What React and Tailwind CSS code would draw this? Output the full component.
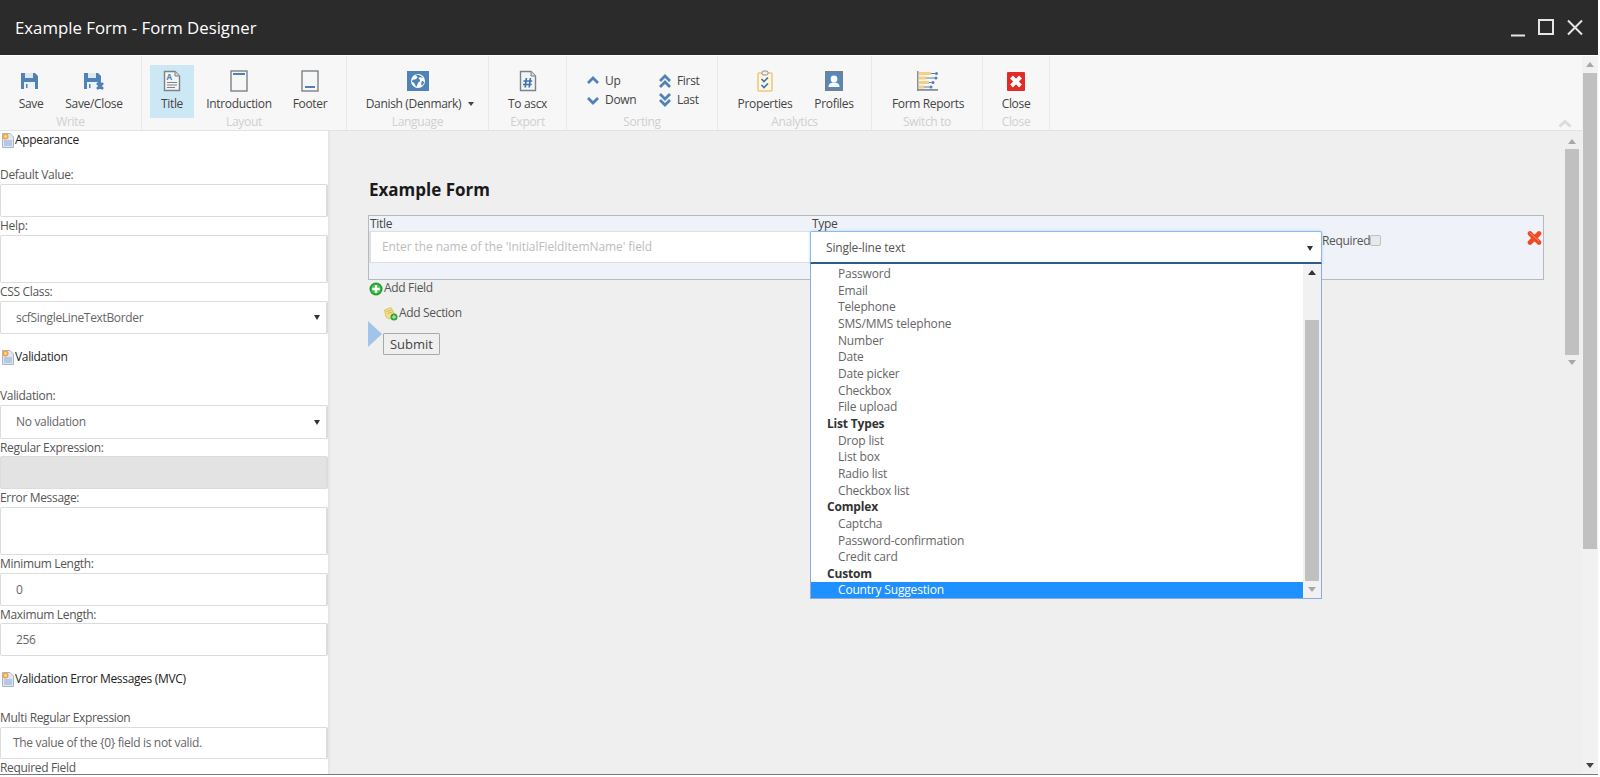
import React from "react";

const Save = ({ x }) => (
  <svg width="22" height="18" viewBox="0 0 22 18">
    <path d="M1 1H15L18 4V17H1Z" fill="#4f82b9" />
    <rect x="5" y="1" width="8" height="5" fill="#dfe7ef" />
    <rect x="4" y="10" width="11" height="7" fill="#eef3f8" />
    <rect x="6" y="12" width="1.5" height="4" fill="#4f82b9" />
    {x && <path d="M14 11l6 6M20 11l-6 6" stroke="#4f82b9" strokeWidth="2.6" />}
  </svg>
);
const Page = ({ children }) => (
  <svg width="18" height="22" viewBox="0 0 18 22">
    <path d="M1.5 1.5H12L16.5 6V20.5H1.5Z" fill="#f4f4f4" stroke="#7b8288" strokeWidth="1.4" />
    <path d="M12 1.5V6H16.5" fill="#d8d8d8" stroke="#7b8288" />
    {children}
  </svg>
);
const Frame = ({ bar }) => (
  <svg width="18" height="22" viewBox="0 0 18 22">
    <rect x="1" y="1" width="16" height="20" fill="#f7f7f7" stroke="#7b8288" strokeWidth="1.4" />
    <rect x={bar === "top" ? 3 : 4} y={bar === "top" ? 3 : 16} width={bar === "top" ? 12 : 10} height="2" fill="#4f82b9" />
  </svg>
);
const Globe = () => (
  <svg width="22" height="20" viewBox="0 0 22 20">
    <rect width="22" height="20" fill="#4f82b9" />
    <circle cx="11" cy="10" r="7" fill="#fff" />
    <path d="M8 4c3 1 3 3 1 4s-4 0-4 3c2 0 3 2 4 5 2-2 1-4 3-5s1-3-1-4c2-1 3-1 5 0-1-2-5-4-8-3zM15 10c2 0 2 1 2 2l-2 3c-1-2-1-3 0-5z" fill="#4f82b9" />
  </svg>
);
const Hash = () => (
  <svg width="18" height="22" viewBox="0 0 18 22">
    <path d="M1.5 1.5H12L16.5 6V20.5H1.5Z" fill="#f4f4f4" stroke="#7b8288" strokeWidth="1.4" />
    <path d="M12 1.5V6H16.5" fill="#d8d8d8" stroke="#7b8288" />
    <path d="M7.4 8L6.200 17.500M11.400 8L10.200 17.500M4.500 11H13.200M4 14.500H12.700" stroke="#3f75ad" strokeWidth="1.7" />
  </svg>
);
const Chev = ({ down, dbl }) => (
  <svg width="14" height="16" viewBox="0 0 14 16" fill="none" stroke="#4f82b9" strokeWidth="2.8">
    {dbl ? (
      down ? (
        <>
          <path d="M2 2l5 5 5-5" />
          <path d="M2 8l5 5 5-5" />
        </>
      ) : (
        <>
          <path d="M2 8l5-5 5 5" />
          <path d="M2 14l5-5 5 5" />
        </>
      )
    ) : down ? (
      <path d="M2 6l5 5 5-5" />
    ) : (
      <path d="M2 10l5-5 5 5" />
    )}
  </svg>
);
const Clip = () => (
  <svg width="16" height="22" viewBox="0 0 16 22">
    <rect x="1" y="3" width="14" height="18" rx="1" fill="#fdf6e3" stroke="#f0c97f" strokeWidth="1.6" />
    <rect x="5" y="1" width="6" height="4" rx="1.5" fill="#eee" stroke="#8a8a8a" />
    <path d="M4.500 9l2.500 2.500 4-4M4.500 15l2.500 2.500 4-4" fill="none" stroke="#3f75ad" strokeWidth="1.7" />
  </svg>
);
const Profile = () => (
  <svg width="18" height="20" viewBox="0 0 18 20">
    <rect width="18" height="20" fill="#75808a" />
    <rect x="2" y="2" width="14" height="16" fill="#4f8ac9" />
    <circle cx="9" cy="8" r="3.4" fill="#fff" />
    <path d="M3.5 16c0-3.5 2.5-4.5 5.5-4.5s5.500 1 5.500 4.500z" fill="#fff" />
  </svg>
);
const Reports = () => (
  <svg width="22" height="20" viewBox="0 0 22 20">
    <rect x="0" y="0" width="1.500" height="20" fill="#8a8f94" />
    <rect x="0" y="18" width="21" height="1.800" fill="#8a8f94" />
    <rect x="2" y="1" width="12" height="3" fill="#f5cf82" />
    <rect x="2" y="5.500" width="7" height="3" fill="#f5cf82" />
    <rect x="2" y="10" width="10" height="3" fill="#f5cf82" />
    <rect x="2" y="14.500" width="5" height="3" fill="#f5cf82" />
    <path d="M14 2.500h5M9 7h10M12 11.500h4M7 16h7" stroke="#4f82b9" />
    <circle cx="19.500" cy="2.500" r="1.500" fill="#4f82b9" />
    <circle cx="19" cy="7" r="1.500" fill="#4f82b9" />
    <circle cx="16" cy="11.500" r="1.500" fill="#4f82b9" />
    <circle cx="14" cy="16" r="1.500" fill="#4f82b9" />
  </svg>
);
const CloseBox = () => (
  <svg width="18" height="19" viewBox="0 0 18 19">
    <rect width="18" height="19" rx="1" fill="#e02b27" />
    <path d="M4.500 5l9 9M13.500 5l-9 9" stroke="#fff" strokeWidth="4" />
  </svg>
);
const SectionIcon = () => (
  <svg width="12" height="15" viewBox="0 0 12 15" className="shrink-0">
    <path d="M.5.500H8L11.500 4V14.500H.5Z" fill="#dfe7f3" stroke="#a5b4c8" />
    <rect x="2" y="7" width="8" height="6" fill="#b4c8e4" />
    <circle cx="3.500" cy="3.500" r="3" fill="#f5a04a" />
    <circle cx="3.500" cy="3.500" r="1.400" fill="#ffe07a" />
  </svg>
);
const PlusCircle = () => (
  <svg width="14" height="14" viewBox="0 0 14 14" className="shrink-0">
    <circle cx="7" cy="7" r="6.500" fill="#1f9b2e" />
    <circle cx="7" cy="7" r="5" fill="#44bd4c" />
    <path d="M7 3.200v7.600M3.200 7h7.600" stroke="#fff" strokeWidth="2.400" />
  </svg>
);
const AddSectionIcon = () => (
  <svg width="14" height="14" viewBox="0 0 14 14" className="shrink-0">
    <path d="M.5 3L7 .5 11 7.500 5 12 2 10Z" fill="#f3e08a" stroke="#d6b64c" strokeWidth=".7" />
    <path d="M2.500 4.500l5-1.500M3.500 6.500l5-1.500" stroke="#c9a53c" strokeWidth=".7" />
    <circle cx="10" cy="10" r="3.500" fill="#2ea336" />
    <path d="M10 8v4M8 10h4" stroke="#9fe6a2" strokeWidth="1.400" />
  </svg>
);
const RedX = () => (
  <svg width="15" height="14" viewBox="0 0 15 14">
    <path d="M3 2.500l9 9M12 2.500l-9 9" stroke="#ee4b23" strokeWidth="4.600" strokeLinecap="round" />
    <path d="M3 2l9 8" stroke="#fb8a63" strokeWidth="1" strokeLinecap="round" />
  </svg>
);

const TBtn = ({ w, icon, label, active }) => (
  <div className={`flex h-[53px] flex-col items-center ${w} ${active ? "bg-[#cde8f5]" : ""}`}>
    <div className="flex h-[31px] shrink-0 items-center justify-center pt-[1px]">{icon}</div>
    <div className="whitespace-nowrap leading-[16px]">{label}</div>
  </div>
);

const Group = ({ w, label, children, cls = "justify-center" }) => (
  <div className={`flex h-full shrink-0 flex-col border-r border-[#e9e9e9] ${w}`}>
    <div className={`mt-[9px] flex h-[53px] shrink-0 ${cls}`}>{children}</div>
    <div className="-mt-[2px] text-center leading-[12px] text-[#cfcfcf]">{label}</div>
  </div>
);

const Sort = ({ w, icon, label }) => (
  <div className={`flex h-[19px] items-center gap-[5px] ${w}`}>
    {icon}
    <span className="leading-[16px]">{label}</span>
  </div>
);

const Label = ({ h = "h-[18px]", children }) => (
  <div className={`${h} whitespace-nowrap leading-[18px] text-[#555]`}>{children}</div>
);
const Box = ({ h, children, bg = "bg-white", arrow }) => (
  <div className={`flex ${h} items-center justify-between rounded-[2px] border border-r-2 border-[#dcdcdc] ${bg} pl-[15px] pr-[6px] text-[#666]`}>
    <span>{children}</span>
    {arrow && <span className="border-x-[3px] border-t-[5px] border-x-transparent border-t-[#333]" />}
  </div>
);
const Heading = ({ children, cls }) => (
  <div className={`flex items-center gap-[1px] pl-[2px] text-[#222] ${cls}`}>
    <SectionIcon />
    <span className="leading-[18px]">{children}</span>
  </div>
);

const Option = ({ children, group, selected }) => (
  <div
    className={`h-[16.67px] whitespace-nowrap leading-[16.67px] tracking-[-0.18px] ${group ? "pl-[16px] font-bold text-[#333]" : "pl-[27px]"} ${
      selected ? "bg-[#1e90ff] text-white" : group ? "" : "text-[#666]"
    }`}
  >
    {children}
  </div>
);

const Track = ({ w, cls, arrowTop, arrowBottom, thumbTop, thumbH, bg }) => (
  <div className={`flex flex-col items-center ${w} ${bg} ${cls}`}>
    <div className={`mt-[6px] border-x-[4px] border-b-[5px] border-x-transparent ${arrowTop}`} />
    <div className="w-full" style={{ height: thumbTop }} />
    <div className="w-[14px] bg-[#c0c0c0]" style={{ height: thumbH }} />
    <div className="flex-1" />
    <div className={`mb-[6px] border-x-[4px] border-t-[5px] border-x-transparent ${arrowBottom}`} />
  </div>
);

export default function App() {
  return (
    <div className="flex h-[777px] w-[1600px] flex-col overflow-hidden bg-white font-['Open_Sans',sans-serif] text-[12px] tracking-[-0.33px] text-[#444]">
      <div className="flex h-[775px] w-[1598px] flex-col border-b border-[#7a7a7a]">
        <div className="flex h-[55px] shrink-0 items-center justify-between bg-[#2b2b2b] pl-[15px] pr-[15px]">
          <div className="text-[16.8px] leading-[22px] tracking-normal text-white">Example Form - Form Designer</div>
          <div className="flex items-center">
            <svg width="72" height="18" viewBox="0 0 72 18" fill="none" stroke="#e6e6e6" strokeWidth="2">
              <path d="M0 16.500H14" />
              <rect x="28" y="1" width="14" height="14" />
              <path d="M57 1.500L71 15.500M71 1.500L57 15.500" />
            </svg>
          </div>
        </div>
        <div className="flex min-h-0 flex-1 border-t border-white">
          <div className="flex min-w-0 flex-1 flex-col">
            {/* ribbon */}
            <div className="flex h-[75px] shrink-0 border-b border-[#e3e3e3] bg-[#f7f7f7] text-[#444]">
              <Group w="w-[142px]" label="Write" cls="justify-start">
                <TBtn w="w-[62px]" icon={<Save />} label="Save" />
                <TBtn w="w-[64px]" icon={<Save x />} label="Save/Close" />
              </Group>
              <Group w="w-[205px]" label="Layout" cls="justify-start pl-[8px]">
                <TBtn
                  w="w-[44px]"
                  active
                  label="Title"
                  icon={
                    <Page>
                      <text x="3.500" y="10" fontSize="8" fontWeight="700" fill="#4f82b9">A</text>
                      <path d="M4 12.500H14M4 15H14M4 17.500H12" stroke="#7b8288" />
                    </Page>
                  }
                />
                <TBtn w="w-[90px]" icon={<Frame bar="top" />} label="Introduction" />
                <TBtn w="w-[52px]" icon={<Frame bar="bottom" />} label="Footer" />
              </Group>
              <Group w="w-[142px]" label="Language">
                <TBtn
                  w="w-full"
                  icon={<Globe />}
                  label={
                    <span className="ml-[5px] inline-flex items-center gap-[7px]">
                      Danish (Denmark)
                      <span className="border-x-[3.5px] border-t-[4px] border-x-transparent border-t-[#444]" />
                    </span>
                  }
                />
              </Group>
              <Group w="w-[78px]" label="Export">
                <TBtn w="w-full" icon={<Hash />} label="To ascx" />
              </Group>
              <Group w="w-[151px]" label="Sorting" cls="justify-start pl-[19px]">
                <div className="pt-[6px]">
                  <Sort w="w-[72px]" icon={<Chev />} label="Up" />
                  <Sort w="w-[72px]" icon={<Chev down />} label="Down" />
                </div>
                <div className="pt-[6px]">
                  <Sort w="w-[50px]" icon={<Chev dbl />} label="First" />
                  <Sort w="w-[50px]" icon={<Chev dbl down />} label="Last" />
                </div>
              </Group>
              <Group w="w-[154px]" label="Analytics" cls="justify-start">
                <TBtn w="w-[94px]" icon={<Clip />} label="Properties" />
                <TBtn w="w-[44px]" icon={<Profile />} label="Profiles" />
              </Group>
              <Group w="w-[111px]" label="Switch to" cls="justify-center pl-[2px]">
                <TBtn w="w-full" icon={<Reports />} label="Form Reports" />
              </Group>
              <Group w="w-[67px]" label="Close">
                <TBtn w="w-full" icon={<CloseBox />} label="Close" />
              </Group>
              <div className="flex flex-1 items-end justify-end pb-[2px] pr-[10px]">
                <svg width="14" height="9" viewBox="0 0 14 9" fill="none" stroke="#dcdcdc" strokeWidth="3">
                  <path d="M1.500 7.500L7 2.500l5.500 5" />
                </svg>
              </div>
            </div>
            {/* content */}
            <div className="flex min-h-0 flex-1">
              <div className="w-[328px] shrink-0 overflow-hidden bg-white">
                <Heading cls="h-[18px]">Appearance</Heading>
                <div className="mt-[17px]">
                  <Label>Default Value:</Label>
                </div>
                <Box h="h-[33px]" />
                <Label>Help:</Label>
                <Box h="h-[48px]" />
                <Label>CSS Class:</Label>
                <Box h="h-[33px]" arrow>scfSingleLineTextBorder</Box>
                <Heading cls="mt-[14px] h-[18px]">Validation</Heading>
                <div className="mt-[21px]">
                  <Label>Validation:</Label>
                </div>
                <Box h="h-[34px]" arrow>No validation</Box>
                <Label h="h-[17px]">Regular Expression:</Label>
                <Box h="h-[33px]" bg="bg-[#e3e3e3]" />
                <Label>Error Message:</Label>
                <Box h="h-[48px]" />
                <Label>Minimum Length:</Label>
                <Box h="h-[33px]">0</Box>
                <Label h="h-[17px]">Maximum Length:</Label>
                <Box h="h-[33px]">256</Box>
                <Heading cls="mt-[14px] h-[18px]">Validation Error Messages (MVC)</Heading>
                <div className="mt-[21px]">
                  <Label>Multi Regular Expression</Label>
                </div>
                <div className="[&>div]:pl-[12px]">
                  <Box h="h-[32px]">The value of the {"{0}"} field is not valid.</Box>
                </div>
                <Label>Required Field</Label>
              </div>
              <div className="w-[2px] shrink-0 bg-[#e6e6e6]" />
              <div className="flex min-w-0 flex-1 bg-[#efefef]">
                <div className="relative min-w-0 flex-1 pl-[38px] pt-[47px]">
                  <h1 className="ml-[1px] text-[17px] font-bold leading-[23px] tracking-normal text-[#1a1a1a]">Example Form</h1>
                  <div className="mt-[14px] flex h-[65px] w-[1176px] border border-[#b5b9c0] bg-[#eff3f9]">
                    <div className="w-[441px] shrink-0">
                      <div className="h-[15px] pl-[1px] leading-[16px] text-[#444]">Title</div>
                      <div className="flex h-[32px] items-center border-y border-l-2 border-[#dcdfe4] border-r-0 bg-white pl-[11px] tracking-[-0.08px] text-[#bdbdbd]">
                        Enter the name of the 'InitialFieldItemName' field
                      </div>
                    </div>
                    <div className="w-[512px] shrink-0">
                      <div className="h-[15px] pl-[2px] leading-[16px] text-[#444]">Type</div>
                      <div className="flex h-[33px] items-center justify-between rounded-t-[2px] border border-b-2 border-[#8ebbe3] border-b-[#2f5c8f] bg-white pl-[15px] pr-[8px] pt-[2px] tracking-[-0.18px] text-[#555] shadow-[0_0_3px_#a8d4f5]">
                        <span>Single-line text</span>
                        <span className="border-x-[3px] border-t-[5px] border-x-transparent border-t-[#333]" />
                      </div>
                    </div>
                    <div className="flex h-[42px] flex-1 items-start pt-[17px]">
                      <span className="leading-[16px] text-[#555]">Required</span>
                      <span className="mt-[2px] h-[11px] w-[11px] rounded-[2px] border border-[#c0c0c0] bg-[#e9e9e9]" />
                      <span className="ml-auto mr-[1px] -mt-[2px]">
                        <RedX />
                      </span>
                    </div>
                  </div>
                  <div className="ml-[1px] mt-[1px] flex h-[16px] items-center gap-[1px] text-[#555]">
                    <PlusCircle />
                    <span className="relative top-[-1px]">Add Field</span>
                  </div>
                  <div className="ml-[16px] mt-[9px] flex h-[16px] items-center gap-[1px] text-[#555]">
                    <AddSectionIcon />
                    <span className="relative top-[-1px]">Add Section</span>
                  </div>
                  <div className="flex h-[33px] items-start">
                    <span className="-mt-[1px] border-y-[13px] border-l-[14px] border-y-transparent border-l-[#a3c4ea]" />
                    <button className="ml-[1px] mt-[11px] h-[22px] w-[57px] rounded-[1px] border border-[#a8a8a8] bg-[#efefef] text-[13px] leading-[18px] tracking-normal text-[#444]">
                      Submit
                    </button>
                  </div>
                  {/* open select list */}
                  <div className="absolute left-[480px] top-[133px] flex h-[335px] w-[512px] border border-t-0 border-[#8fabd6] bg-white">
                    <div className="min-w-0 flex-1 overflow-hidden pt-[2px]">
                      {[
                        ["Password"], ["Email"], ["Telephone"], ["SMS/MMS telephone"], ["Number"], ["Date"], ["Date picker"], ["Checkbox"], ["File upload"],
                        ["List Types", 1], ["Drop list"], ["List box"], ["Radio list"], ["Checkbox list"],
                        ["Complex", 1], ["Captcha"], ["Password-confirmation"], ["Credit card"],
                        ["Custom", 1],
                      ].map(([t, g]) => (
                        <Option key={t} group={!!g}>{t}</Option>
                      ))}
                      <Option selected>Country Suggestion</Option>
                    </div>
                    <Track
                      w="w-[18px]"
                      bg="bg-[#f1f1f1]"
                      cls="shrink-0"
                      arrowTop="border-b-[#333]"
                      arrowBottom="border-t-[#a8a8a8]"
                      thumbTop={45}
                      thumbH={261}
                    />
                  </div>
                </div>
                <div className="flex w-[18px] shrink-0 flex-col items-center pr-[3px] pt-[8px]">
                  <div className="border-x-[4px] border-b-[5px] border-x-transparent border-b-[#a8a8a8]" />
                  <div className="mt-[5px] h-[206px] w-[14px] bg-[#c0c0c0]" />
                  <div className="mt-[5px] border-x-[4px] border-t-[5px] border-x-transparent border-t-[#a8a8a8]" />
                </div>
              </div>
            </div>
          </div>
          <Track
            w="w-[16px]"
            bg="bg-[#f1f1f1]"
            cls="shrink-0"
            arrowTop="border-b-[#a8a8a8]"
            arrowBottom="border-t-[#444]"
            thumbTop={6}
            thumbH={476}
          />
        </div>
      </div>
    </div>
  );
}
